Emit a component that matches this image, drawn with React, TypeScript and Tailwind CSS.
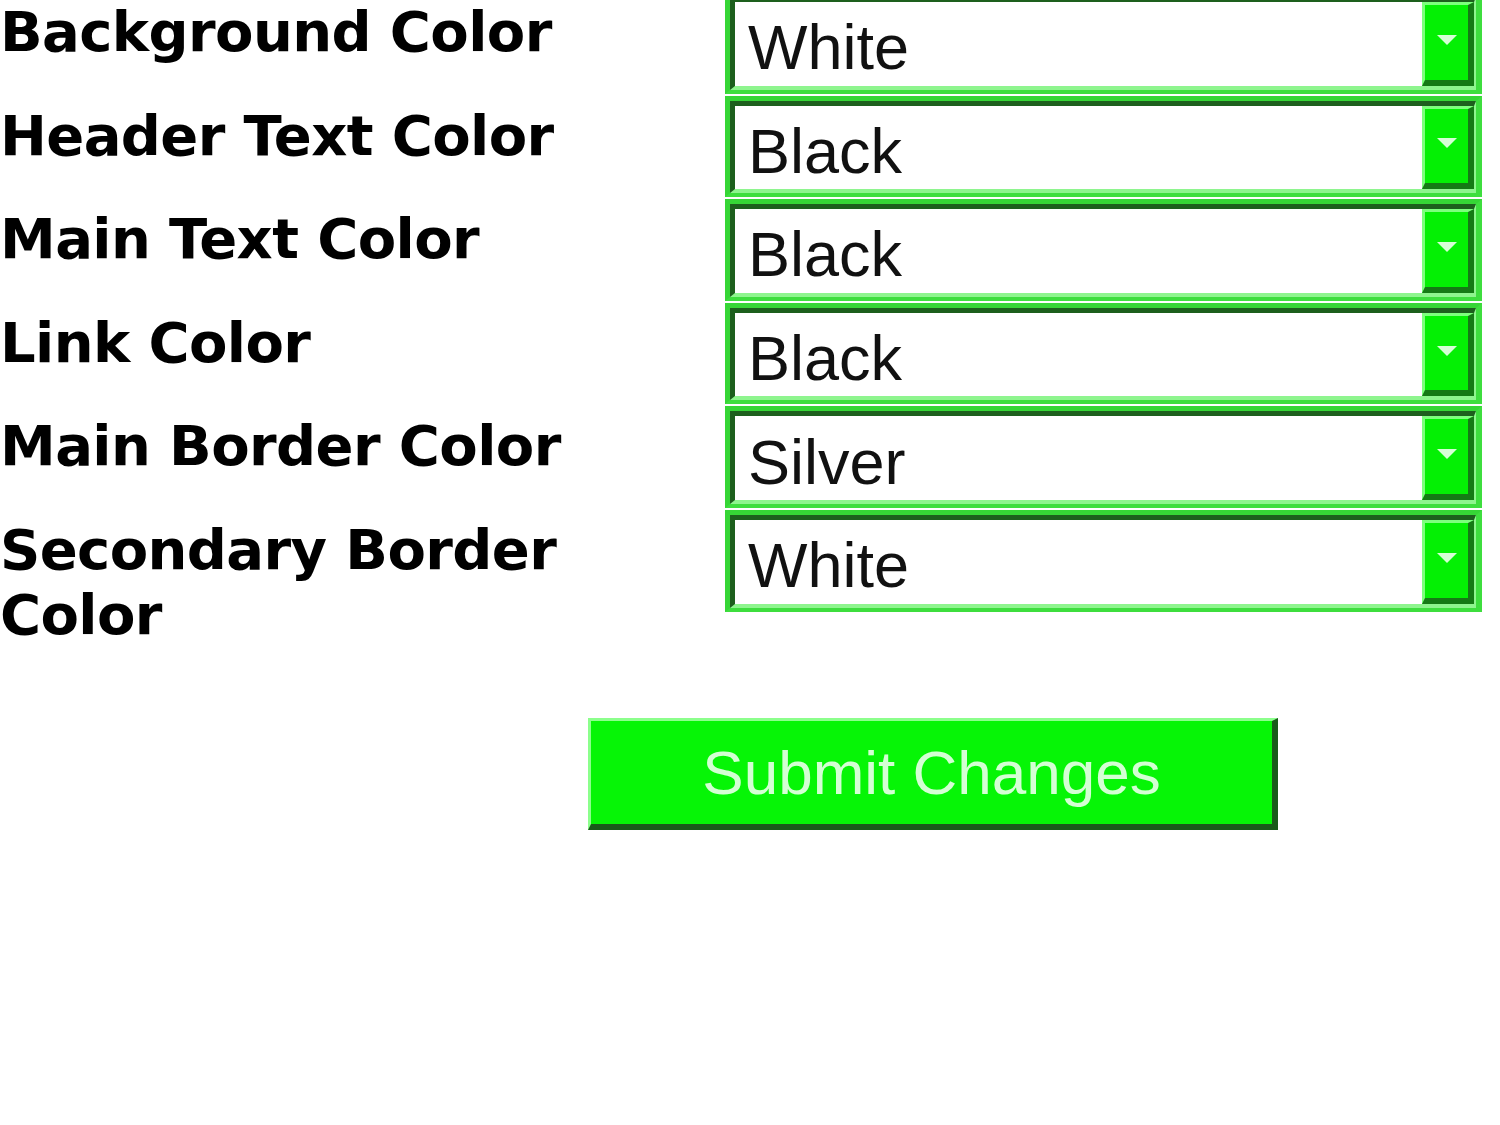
const rows: [string, string][] = [
  ["Background Color", "White"],
  ["Header Text Color", "Black"],
  ["Main Text Color", "Black"],
  ["Link Color", "Black"],
  ["Main Border Color", "Silver"],
  ["Secondary Border Color", "White"],
];

const ColorSelect = ({ value }: { value: string }) => {
  return (
    <div className="h-[101.6px] w-[757px] shrink-0 border-t-[5px] border-l-[5px] border-b-[4px] border-r-[6px] border-t-[#36d636] border-l-[#36d636] border-b-[#3ede3e] border-r-[#3ede3e]">
      <div className="flex h-full border-t-[5px] border-l-[5px] border-b-[4px] border-r-[2px] border-t-[#1d5f1d] border-l-[#1d5f1d] border-b-[#8ef58e] border-r-[#8ef58e] bg-white">
        <div
          className="flex flex-1 items-center pl-[13px] pt-[8px] text-[63px] leading-none text-[#111]"
          style={{ fontFamily: '"Liberation Sans", Arial, sans-serif' }}
        >
          {value}
        </div>
        <div className="flex w-[52px] items-center justify-center border-t-[3px] border-l-[3px] border-b-[6px] border-r-[6px] border-t-[#7dff7d] border-l-[#7dff7d] border-b-[#157a15] border-r-[#157a15] bg-[#04f004]">
          <svg width="20" height="11" viewBox="0 0 20 11" className="mt-[-4px]">
            <polygon points="0,0 20,0 10,10" fill="#d6ffd6" />
          </svg>
        </div>
      </div>
    </div>
  );
};

const App = () => {
  return (
    <div className="h-[1125px] w-[1500px] overflow-hidden bg-white">
      <div className="mt-[-8px] flex flex-col gap-[2px]">
        {rows.map(([label, value]) => (
          <div key={label} className="flex items-start">
            <div className="w-[725px] shrink-0 pr-[100px] pt-[7px]">
              <p
                className="text-[56px] font-bold leading-[65px] tracking-[-0.6px] text-black"
                style={{ fontFamily: '"DejaVu Sans", Verdana, sans-serif' }}
              >
                {label}
              </p>
            </div>
            <ColorSelect value={value} />
          </div>
        ))}
      </div>

      <div className="mt-[71px] pl-[588px]">
        <button
          className="flex h-[112px] w-[690px] items-center justify-center border-t-[3px] border-l-[3px] border-b-[6px] border-r-[6px] border-t-[#8cff8c] border-l-[#8cff8c] border-b-[#1a5a1a] border-r-[#1a5a1a] bg-[#06f506] text-[62px] text-[#d4ffd4]"
          style={{ fontFamily: '"Liberation Sans", Arial, sans-serif' }}
        >
          Submit Changes
        </button>
      </div>
    </div>
  );
};

export default App;
